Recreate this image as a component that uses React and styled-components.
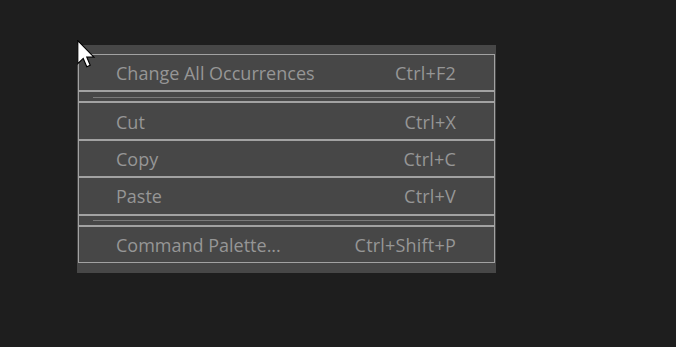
import React from "react";
import styled, { createGlobalStyle } from "styled-components";

const Global = createGlobalStyle`
  html, body { margin: 0; padding: 0; background: #1e1e1e; }
  body { width: 676px; height: 347px; overflow: hidden; position: relative; }
`;

const Page = styled.div`
  width: 676px;
  height: 347px;
  padding: 45px 0 0 77px;
  box-sizing: border-box;
  position: relative;
`;

const Menu = styled.div`
  width: 419px;
  box-sizing: border-box;
  background: #474747;
  padding: 9px 1px 10px 1px;
  display: flex;
  flex-direction: column;
  font-family: "Open Sans", "Noto Sans", sans-serif;
`;

const Item = styled.div`
  height: 37.4px;
  box-sizing: border-box;
  border: 1px solid #a2a2a2;
  display: flex;
  align-items: center;
  justify-content: space-between;
  padding: 1px 38px 0 37px;
  color: #969696;
  font-size: 18px;
`;

const Separator = styled.div`
  height: 11px;
  box-sizing: border-box;
  border: 1px solid #a2a2a2;
  display: flex;
  align-items: center;
  padding: 0 14px 0 14px;
  &::after {
    content: "";
    flex: 1;
    height: 1px;
    background: #7a7a7a;
    margin-top: 1px;
  }
`;

const Label = styled.span``;
const Key = styled.span`
  letter-spacing: 0.2px;
`;

const Cursor = styled.svg`
  position: absolute;
  left: 77px;
  top: 40px;
`;

const items = [
  ["Change All Occurrences", "Ctrl+F2"],
  null,
  ["Cut", "Ctrl+X"],
  ["Copy", "Ctrl+C"],
  ["Paste", "Ctrl+V"],
  null,
  ["Command Palette...", "Ctrl+Shift+P"],
];

export default function App() {
  return (
    <Page>
      <Global />
      <Menu>
        {items.map((it, i) =>
          it ? (
            <Item key={i}>
              <Label>{it[0]}</Label>
              <Key>{it[1]}</Key>
            </Item>
          ) : (
            <Separator key={i} />
          )
        )}
      </Menu>
      <Cursor width="23" height="30" viewBox="0 0 16 21">
        <path
          d="M0.5 0.5 L0.5 16.5 L4.3 12.9 L6.8 18.7 L9.2 17.7 L6.8 12 L11.8 12 Z"
          fill="#fff"
          stroke="#000"
          strokeWidth="0.8"
        />
      </Cursor>
    </Page>
  );
}
